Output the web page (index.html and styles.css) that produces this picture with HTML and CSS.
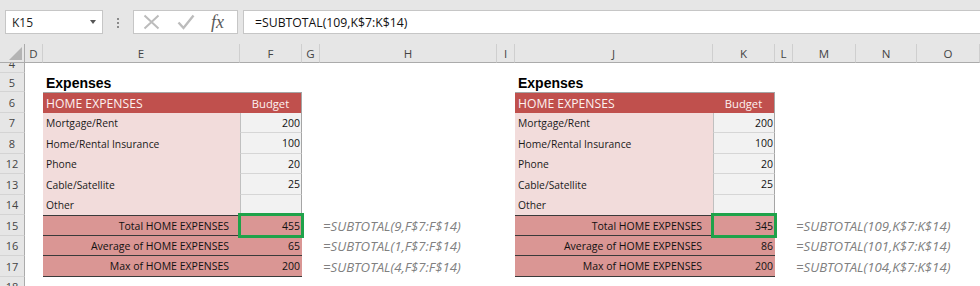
FILE: index.html
```html
<!DOCTYPE html>
<html>
<head>
<meta charset="utf-8">
<link rel="stylesheet" href="styles.css">
</head>
<body>
<div class="fbar">
  <div class="namebox"><span>K15</span><span class="dd"></span></div>
  <div class="dots"><i></i><i></i><i></i></div>
  <div class="btns">
    <svg class="ic-x" width="17" height="16" viewBox="0 0 17 16"><path d="M1.5 1.5 L15.5 14.5 M15.5 1.5 L1.5 14.5" stroke="#bcbcbc" stroke-width="2" fill="none"/></svg>
    <svg class="ic-ok" width="18" height="16" viewBox="0 0 18 16"><path d="M1.5 8.5 L6.5 14 L16.5 1.5" stroke="#bcbcbc" stroke-width="2.4" fill="none"/></svg>
    <span class="fx">fx</span>
  </div>
  <div class="finput">=SUBTOTAL(109,K$7:K$14)</div>
</div>
<div class="sheet">
  <div class="row colhdr">
    <div class="corner"><svg width="13" height="13" viewBox="0 0 13 13"><polygon points="13,0 13,13 0,13" fill="#b4b4b4"/></svg></div>
    <div>D</div><div>E</div><div>F</div><div>G</div><div>H</div><div>I</div><div>J</div><div>K</div><div>L</div><div>M</div><div>N</div><div>O</div>
  </div>
  <div class="row r4"><div class="rh"><span>4</span></div></div>
  <div class="row r5">
    <div class="rh">5</div>
    <div class="t cE">Expenses</div>
    <div class="t cJ">Expenses</div>
  </div>
  <div class="row tall">
    <div class="rh">6</div>
    <div class="hd lbl cE">HOME EXPENSES</div><div class="hd bud cF">Budget</div>
    <div class="hd lbl cJ">HOME EXPENSES</div><div class="hd bud cK">Budget</div>
  </div>
  <div class="row">
    <div class="rh">7</div>
    <div class="item cE">Mortgage/Rent</div><div class="val cF">200</div>
    <div class="item cJ">Mortgage/Rent</div><div class="val cK">200</div>
  </div>
  <div class="row tall">
    <div class="rh">8</div>
    <div class="item cE">Home/Rental Insurance</div><div class="val cF">100</div>
    <div class="item cJ">Home/Rental Insurance</div><div class="val cK">100</div>
  </div>
  <div class="row">
    <div class="rh">12</div>
    <div class="item cE">Phone</div><div class="val cF">20</div>
    <div class="item cJ">Phone</div><div class="val cK">20</div>
  </div>
  <div class="row tall">
    <div class="rh">13</div>
    <div class="item cE">Cable/Satellite</div><div class="val cF">25</div>
    <div class="item cJ">Cable/Satellite</div><div class="val cK">25</div>
  </div>
  <div class="row">
    <div class="rh">14</div>
    <div class="item cE">Other</div><div class="val cF"></div>
    <div class="item cJ">Other</div><div class="val cK"></div>
  </div>
  <div class="row tall">
    <div class="rh">15</div>
    <div class="sum lbl first cE">Total HOME EXPENSES</div><div class="sum num first sel cF">455</div>
    <div class="ftxt cH">=SUBTOTAL(9,F$7:F$14)</div>
    <div class="sum lbl first cJ">Total HOME EXPENSES</div><div class="sum num first sel cK">345</div>
    <div class="ftxt cM">=SUBTOTAL(109,K$7:K$14)</div>
  </div>
  <div class="row">
    <div class="rh">16</div>
    <div class="sum lbl cE">Average of HOME EXPENSES</div><div class="sum num cF">65</div>
    <div class="ftxt cH">=SUBTOTAL(1,F$7:F$14)</div>
    <div class="sum lbl cJ">Average of HOME EXPENSES</div><div class="sum num cK">86</div>
    <div class="ftxt cM">=SUBTOTAL(101,K$7:K$14)</div>
  </div>
  <div class="row tall">
    <div class="rh">17</div>
    <div class="sum lbl cE">Max of HOME EXPENSES</div><div class="sum num cF">200</div>
    <div class="ftxt cH">=SUBTOTAL(4,F$7:F$14)</div>
    <div class="sum lbl cJ">Max of HOME EXPENSES</div><div class="sum num cK">200</div>
    <div class="ftxt cM">=SUBTOTAL(104,K$7:K$14)</div>
  </div>
  <div class="row">
    <div class="rh">18</div>
  </div>
</div>
</body>
</html>
```
FILE: styles.css
```css
* { box-sizing: border-box; }
body {
  margin: 0;
  width: 980px;
  height: 286px;
  overflow: hidden;
  background: #fff;
  font-family: "Open Sans", "Noto Sans", sans-serif;
  color: #222;
}
.fbar {
  height: 44px;
  background: #e6e6e6;
  display: flex;
  align-items: flex-start;
  padding: 10px 0 0 5px;
}
.namebox {
  width: 98px;
  height: 24px;
  background: #fff;
  border: 1px solid #c6c6c6;
  display: flex;
  align-items: center;
  justify-content: space-between;
  padding: 0 6px;
  font-size: 12px;
  color: #222;
}
.dd {
  width: 0;
  height: 0;
  border-left: 3.5px solid transparent;
  border-right: 3.5px solid transparent;
  border-top: 4px solid #555;
}
.dots {
  width: 30px;
  display: flex;
  flex-direction: column;
  align-items: center;
  gap: 2px;
  padding-top: 8px;
}
.dots i {
  display: block;
  width: 2px;
  height: 2px;
  background: #8a8a8a;
}
.btns {
  width: 105px;
  height: 24px;
  background: #fff;
  border: 1px solid #c6c6c6;
  display: flex;
  align-items: center;
  padding-left: 9px;
}
.ic-ok { margin-left: 17px; }
.fx {
  margin-left: 16px;
  font-family: "Liberation Serif", serif;
  font-style: italic;
  font-size: 18px;
  color: #5a5a5a;
  line-height: 1;
}
.finput {
  margin-left: 5px;
  flex: 1;
  height: 24px;
  background: #fff;
  border: 1px solid #c6c6c6;
  border-right: none;
  padding-left: 11px;
  font-size: 12.25px;
  color: #111;
  display: flex;
  align-items: center;
}
.row {
  display: grid;
  grid-template-columns: 25px 18px 197px 62px 18px 177px 18px 198px 62px 18px 63px 61px 1fr;
  height: 20px;
}
.row.tall { height: 21px; }
.row.r5 { height: 19px; }
.row.r4 { height: 10px; }
.colhdr {
  height: 19px;
  background: #e6e6e6;
}
.colhdr > div {
  border-right: 1px solid #cfcfcf;
  border-bottom: 1px solid #ababab;
  display: flex;
  align-items: center;
  justify-content: center;
  font-size: 11.5px;
  color: #444;
}
.colhdr > .corner {
  border-right: 1px solid #ababab;
  align-items: flex-end;
  justify-content: flex-end;
  padding: 0 2px 2px 0;
}
.rh {
  grid-column: 1;
  background: #e6e6e6;
  border-right: 1px solid #ababab;
  border-bottom: 1px solid #d4d4d4;
  display: flex;
  align-items: center;
  justify-content: center;
  font-size: 11px;
  color: #444;
}
.r4 .rh {
  align-items: flex-end;
  overflow: hidden;
}
.r4 .rh span {
  display: block;
  flex: none;
  height: 16px;
  line-height: 16px;
}
.cE { grid-column: 3; }
.cF { grid-column: 4; }
.cH { grid-column: 6; }
.cJ { grid-column: 8; }
.cK { grid-column: 9; }
.cM { grid-column: 11 / span 3; }
.t {
  font-family: "Liberation Sans", Arial, sans-serif;
  font-weight: bold;
  font-size: 14px;
  color: #000;
  padding-left: 3px;
  display: flex;
  align-items: center;
}
.hd {
  background: #c0504d;
  border-top: 1px solid #a5a5a5;
  color: #fdf2f1;
  display: flex;
  align-items: center;
}
.hd.lbl {
  font-size: 12.2px;
  padding-left: 3px;
}
.hd.bud {
  font-size: 11.2px;
  justify-content: center;
  border-right: 1px solid #a5a5a5;
}
.item {
  background: #f2dcdb;
  font-size: 10.3px;
  color: #1a1a1a;
  padding-left: 3px;
  display: flex;
  align-items: center;
}
.val {
  background: #f2f2f2;
  border-left: 1px solid #c0c0c0;
  border-right: 1px solid #a5a5a5;
  border-bottom: 1px solid #d6d6d6;
  font-size: 10.5px;
  color: #111;
  padding-right: 1px;
  display: flex;
  align-items: center;
  justify-content: flex-end;
}
.sum {
  background: #da9694;
  border-bottom: 1px solid #3a3a3a;
  font-size: 10.5px;
  color: #111;
  display: flex;
  align-items: center;
  justify-content: flex-end;
}
.sum.lbl { padding-right: 11px; }
.sum.num { padding-right: 2px; }
.sum.first { border-top: 1px solid #3a3a3a; }
.sel {
  outline: 3px solid #1fa24a;
  outline-offset: -1px;
  position: relative;
  z-index: 1;
}
.ftxt {
  font-style: italic;
  font-size: 13.2px;
  color: #808080;
  padding-left: 3px;
  white-space: nowrap;
  display: flex;
  align-items: center;
}
```
